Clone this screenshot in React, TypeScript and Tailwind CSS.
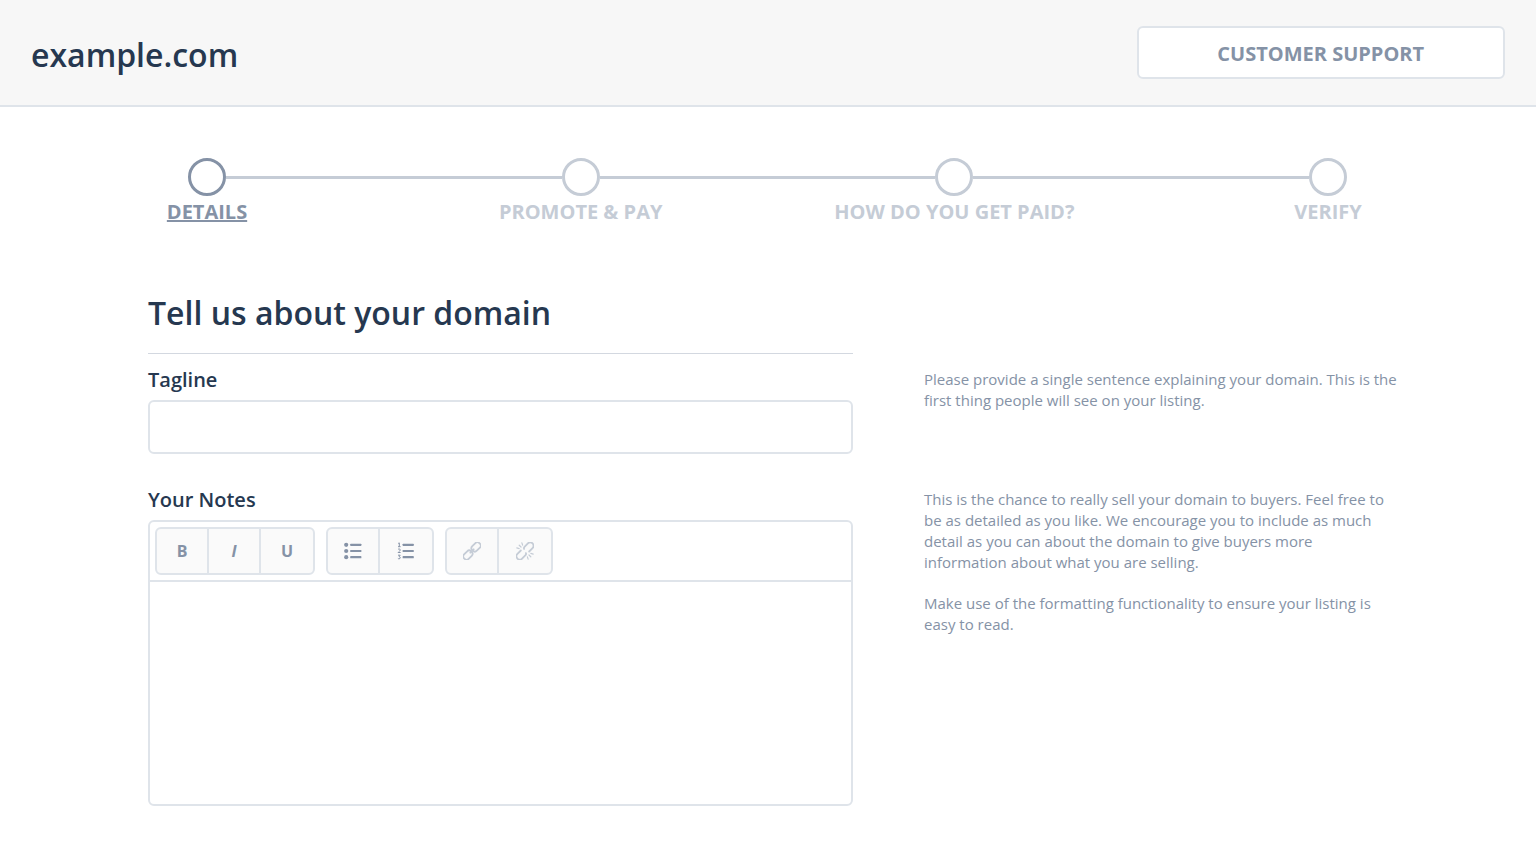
import React, { Fragment, ReactNode } from "react";

const steps = ["Details", "Promote & Pay", "How do you get paid?", "Verify"];

function BulletListIcon() {
  return (
    <svg width="18" height="18" viewBox="0 0 18 18" fill="currentColor" aria-hidden="true">
      <circle cx="2.2" cy="2.8" r="2.1" />
      <circle cx="2.2" cy="9" r="2.1" />
      <circle cx="2.2" cy="15.2" r="2.1" />
      <rect x="6.2" y="1.7" width="11.2" height="2.2" rx="0.6" />
      <rect x="6.2" y="7.9" width="11.2" height="2.2" rx="0.6" />
      <rect x="6.2" y="14.1" width="11.2" height="2.2" rx="0.6" />
    </svg>
  );
}

function NumberedListIcon() {
  return (
    <svg width="18" height="18" viewBox="0 0 18 18" fill="currentColor" aria-hidden="true">
      <rect x="5.6" y="1.7" width="11.2" height="2.2" rx="0.6" />
      <rect x="5.6" y="7.9" width="11.2" height="2.2" rx="0.6" />
      <rect x="5.6" y="14.1" width="11.2" height="2.2" rx="0.6" />
      <g fill="none" stroke="currentColor" strokeWidth="1">
        <path d="M1.2 1.4 2.3 0.9V4.7M1 4.7h2.6" />
        <path d="M1 7.5c.6-.9 2.3-.6 2.3.4 0 .8-1.2 1.3-2.2 2.6h2.5" />
        <path d="M1 13.2h2.2l-1.1 1.4c1.6 0 1.6 2.2 0 2.2-.5 0-.9-.1-1.2-.4" />
      </g>
    </svg>
  );
}

function LinkIcon({ broken = false }: { broken?: boolean }) {
  return (
    <svg
      width="18"
      height="18"
      viewBox="0 0 18 18"
      fill="none"
      stroke="currentColor"
      strokeWidth="1.8"
      strokeLinecap="round"
      aria-hidden="true"
    >
      <g transform="rotate(-45 9 9)">
        {broken ? (
          <>
            <path d="M6.4 5.7H1.6a3.3 3.3 0 0 0 0 6.6h4.8q1.2 0 1.8-1.2" />
            <path d="M11.6 12.3h4.8a3.3 3.3 0 0 0 0-6.6h-4.8q-1.2 0-1.8 1.2" />
            <g strokeWidth="1.2">
              <path d="M9 3.4V.8M6.6 3.2L5.4 1M11.4 3.2l1.2-2.2" />
              <path d="M9 14.6v2.6M6.6 14.8l-1.2 2.2M11.4 14.8l1.2 2.2" />
            </g>
          </>
        ) : (
          <>
            <rect x="-1.8" y="5.8" width="10" height="6.4" rx="2.8" />
            <rect x="9.8" y="5.8" width="10" height="6.4" rx="2.8" />
            <path d="M6.6 9h4.8" />
          </>
        )}
      </g>
    </svg>
  );
}

function ToolGroup({ children }: { children: ReactNode }) {
  return (
    <div className="flex divide-x-2 divide-[#dfe4ea] overflow-hidden rounded-md border-2 border-[#dfe4ea] bg-[#fafafa]">
      {children}
    </div>
  );
}

function ToolButton({ label, disabled, children }: { label: string; disabled?: boolean; children: ReactNode }) {
  return (
    <button
      type="button"
      aria-label={label}
      disabled={disabled}
      className="flex h-11 w-[52px] items-center justify-center text-base font-bold text-[#8592a6] disabled:text-[#c5ccd6]"
    >
      {children}
    </button>
  );
}

export default function App() {
  return (
    <div className="min-h-screen bg-white font-['Open_Sans',sans-serif] text-[#263850]">
      <header className="flex items-center justify-between border-b-2 border-[#dfe4ea] bg-[#f7f7f7] px-[31px] pt-[26px] pb-[26px]">
        <a href="#" className="pt-1 text-[32px] leading-[48px] font-semibold">
          example.com
        </a>
        <button
          type="button"
          className="h-[53px] w-1/4 rounded-md border-2 border-[#dfe4ea] bg-white pt-0.5 text-xl font-bold text-[#8592a6]"
        >
          CUSTOMER SUPPORT
        </button>
      </header>

      <main className="mx-auto max-w-[1240px] pt-[51px] pb-[52px]">
        <ol className="flex pr-[41px] pl-10">
          {steps.map((step, i) => (
            <Fragment key={step}>
              {i > 0 && <li aria-hidden="true" className="mt-[18px] h-[3px] flex-1 bg-[#c5ccd6]" />}
              <li
                aria-current={i === 0 ? "step" : undefined}
                className={`flex w-[38px] flex-col items-center ${i === 0 ? "text-[#8592a6]" : "text-[#c5ccd6]"}`}
              >
                <span className="size-[38px] rounded-full border-3 border-current" />
                <span
                  className={`text-xl leading-8 font-bold whitespace-nowrap uppercase ${i === 0 ? "underline decoration-2" : ""}`}
                >
                  {step}
                </span>
              </li>
            </Fragment>
          ))}
        </ol>

        <form className="mt-[63px] grid grid-cols-[705fr_464fr] gap-x-[71px]">
          <h1 className="border-b border-[#d3d8e0] pb-[18px] text-[32px] leading-[44px] font-semibold">
            Tell us about your domain
          </h1>

          <div className="col-start-1 pt-3">
            <label htmlFor="tagline" className="block text-xl leading-7 font-semibold">
              Tagline
            </label>
            <input
              id="tagline"
              type="text"
              className="mt-1.5 block h-[54px] w-full rounded-md border-2 border-[#dfe4ea] px-4 text-lg outline-none"
            />
          </div>
          <p className="-mr-3 pt-[15px] text-[15px] leading-[21px] text-[#8592a6]">
            Please provide a single sentence explaining your domain. This is the first thing people will see on your
            listing.
          </p>

          <div className="col-start-1 pt-8">
            <label htmlFor="notes" className="block text-xl leading-7 font-semibold">
              Your Notes
            </label>
            <div className="mt-1.5 rounded-md border-2 border-[#dfe4ea]">
              <div className="flex gap-[11px] border-b-2 border-[#dfe4ea] p-[5px]">
                <ToolGroup>
                  <ToolButton label="Bold">B</ToolButton>
                  <ToolButton label="Italic">
                    <span className="italic">I</span>
                  </ToolButton>
                  <ToolButton label="Underline">U</ToolButton>
                </ToolGroup>
                <ToolGroup>
                  <ToolButton label="Bulleted list">
                    <BulletListIcon />
                  </ToolButton>
                  <ToolButton label="Numbered list">
                    <NumberedListIcon />
                  </ToolButton>
                </ToolGroup>
                <ToolGroup>
                  <ToolButton label="Insert link" disabled>
                    <LinkIcon />
                  </ToolButton>
                  <ToolButton label="Remove link" disabled>
                    <LinkIcon broken />
                  </ToolButton>
                </ToolGroup>
              </div>
              <textarea id="notes" className="block h-[222px] w-full resize-none px-4 py-3 text-lg outline-none" />
            </div>
          </div>
          <div className="space-y-5 pt-[35px] text-[15px] leading-[21px] text-[#8592a6]">
            <p>
              This is the chance to really sell your domain to buyers. Feel free to be as detailed as you like. We
              encourage you to include as much detail as you can about the domain to give buyers more information about
              what you are selling.
            </p>
            <p>Make use of the formatting functionality to ensure your listing is easy to read.</p>
          </div>
        </form>
      </main>
    </div>
  );
}
